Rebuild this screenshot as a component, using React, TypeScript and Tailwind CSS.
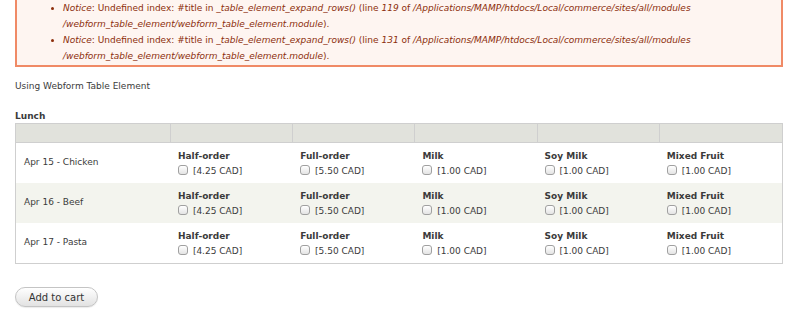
import React from 'react';

interface Meal {
  id: string;
  label: string;
}

const meals: Meal[] = [
  { id: 'chicken', label: 'Apr 15 - Chicken' },
  { id: 'beef', label: 'Apr 16 - Beef' },
  { id: 'pasta', label: 'Apr 17 - Pasta' },
];

const options = [
  { name: 'Half-order', price: '[4.25 CAD]' },
  { name: 'Full-order', price: '[5.50 CAD]' },
  { name: 'Milk', price: '[1.00 CAD]' },
  { name: 'Soy Milk', price: '[1.00 CAD]' },
  { name: 'Mixed Fruit', price: '[1.00 CAD]' },
];

const Checkbox: React.FC = () => (
  <span className="inline-block w-[10px] h-[10px] rounded-[3px] border border-[#a0a0a0] bg-gradient-to-b from-white to-[#e4e4e4] mr-[2px] align-[-1px]" />
);

const Notice: React.FC<{ line: string }> = ({ line }) => (
  <li className="list-disc">
    <em>Notice</em>: Undefined index: #title in <em>_table_element_expand_rows()</em> (line <em>{line}</em> of{' '}
    <em>/Applications/MAMP/htdocs/Local/commerce/sites/all/modules /webform_table_element/webform_table_element.module</em>).
  </li>
);

export default function App() {
  return (
    <div className="w-[800px] h-[321px] bg-white text-[#3b3b3b] text-[9px] overflow-hidden" style={{ fontFamily: '"DejaVu Sans", Verdana, sans-serif' }}>
      <div className="mx-[15px] w-[768px] border-2 border-t-0 border-[#f08a66] bg-[#fef5f1] text-[#8c2e0b] leading-[16px] pb-[1px]">
        <ul className="pl-[46px] pr-[80px]">
          <Notice line="119" />
          <Notice line="131" />
        </ul>
      </div>

      <p className="mx-[15px] mt-[12px] leading-[14px]">Using Webform Table Element</p>

      <div className="mx-[15px] mt-[16px] w-[768px]">
        <div className="font-bold leading-[14px]">Lunch</div>
        <div className="border border-[#cfcfcf]">
          <div className="grid grid-cols-[155px_repeat(5,1fr)] h-[19px] bg-[#e1e2dc] border-b border-[#cfcfcf]">
            {Array.from({ length: 6 }).map((_, i) => (
              <div key={i} className={i < 5 ? 'border-r border-[#cfcfcf]' : ''} />
            ))}
          </div>
          {meals.map((meal, idx) => (
            <div
              key={meal.id}
              className={`grid grid-cols-[155px_repeat(5,1fr)] h-[40px] ${idx === 1 ? 'bg-[#f3f4ee]' : 'bg-white'}`}
            >
              <div className="flex items-center pl-[8px]">{meal.label}</div>
              {options.map((opt) => (
                <div key={opt.name} className="pl-[7px] pt-[6px] leading-[14px]">
                  <div className="font-bold">{opt.name}</div>
                  <div className="mt-[1px]">
                    <Checkbox /> {opt.price}
                  </div>
                </div>
              ))}
            </div>
          ))}
        </div>
      </div>

      <button className="ml-[15px] mt-[23px] w-[83px] h-[20px] rounded-full border border-[#c4c4c4] bg-gradient-to-b from-white to-[#e2e2e2] text-[10px] text-[#333] shadow-[0_1px_1px_rgba(0,0,0,0.08)]">
        Add to cart
      </button>
    </div>
  );
}
